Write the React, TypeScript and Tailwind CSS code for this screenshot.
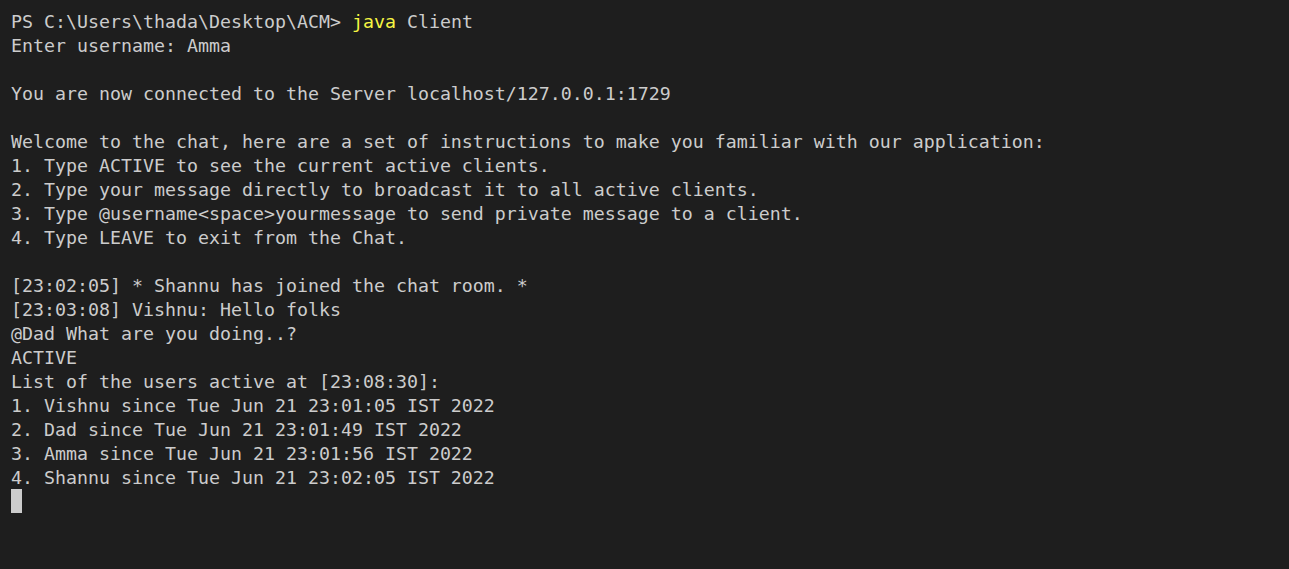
const lines: string[] = [
  "",
  "Enter username: Amma",
  "",
  "You are now connected to the Server localhost/127.0.0.1:1729",
  "",
  "Welcome to the chat, here are a set of instructions to make you familiar with our application:",
  "1. Type ACTIVE to see the current active clients.",
  "2. Type your message directly to broadcast it to all active clients.",
  "3. Type @username<space>yourmessage to send private message to a client.",
  "4. Type LEAVE to exit from the Chat.",
  "",
  "[23:02:05] * Shannu has joined the chat room. *",
  "[23:03:08] Vishnu: Hello folks",
  "@Dad What are you doing..?",
  "ACTIVE",
  "List of the users active at [23:08:30]:",
  "1. Vishnu since Tue Jun 21 23:01:05 IST 2022",
  "2. Dad since Tue Jun 21 23:01:49 IST 2022",
  "3. Amma since Tue Jun 21 23:01:56 IST 2022",
  "4. Shannu since Tue Jun 21 23:02:05 IST 2022",
];

const App = () => {
  return (
    <div className="h-screen w-full bg-[#1e1e1e] pl-[11px] pt-[10px] text-[#cccccc] font-['DejaVu_Sans_Mono',monospace] text-[18.27px] leading-[24px] whitespace-pre overflow-hidden">
      {lines.map((line, i) =>
        i === 0 ? (
          <div key={i}>
            PS C:\Users\thada\Desktop\ACM&gt; <span className="text-[#f5f543]">java</span> Client
          </div>
        ) : (
          <div key={i} className="h-[24px]">
            {line}
          </div>
        )
      )}
      <div className="h-[24px] flex items-start">
        <span className="block w-[11px] h-[24px] -mt-px bg-[#cccccc]" />
      </div>
    </div>
  );
};

export default App;
